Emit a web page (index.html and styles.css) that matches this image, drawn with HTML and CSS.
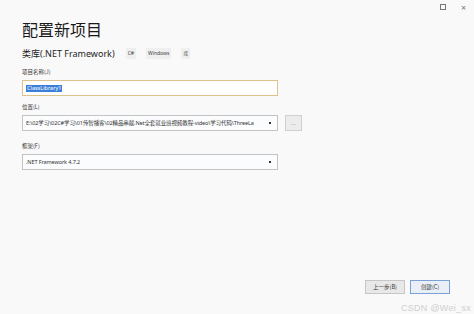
FILE: index.html
```html
<!DOCTYPE html>
<html lang="zh-CN">
<head>
    <meta charset="UTF-8">
    <title>配置新项目</title>
    <link rel="stylesheet" href="styles.css">
</head>
<body>
    <div class="window">
        <!-- 标题栏按钮 -->
        <div class="title-bar">
            <span class="win-btn max-btn"></span>
            <span class="win-btn close-btn">×</span>
        </div>

        <main class="content">
            <h1 class="page-title">配置新项目</h1>
            <div class="template-row">
                <span class="template-name">类库(.NET Framework)</span>
                <span class="tag">C#</span>
                <span class="tag">Windows</span>
                <span class="tag">库</span>
            </div>

            <label class="field-label first">项目名称(J)</label>
            <div class="input-box focused"><span class="selected-text">ClassLibrary1</span></div>

            <label class="field-label">位置(L)</label>
            <div class="location-row">
                <div class="select-box">
                    <span class="select-text">E:\02学习\02C#学习\01传智播客\02精品串献.Net全套就业班视频教程-video\学习代码\ThreeLa</span>
                    <span class="arrow"></span>
                </div>
                <button class="browse-btn">...</button>
            </div>

            <label class="field-label wide">框架(F)</label>
            <div class="select-box">
                <span class="select-text">.NET Framework 4.7.2</span>
                <span class="arrow"></span>
            </div>
        </main>

        <footer class="footer">
            <button class="btn">上一步(B)</button>
            <button class="btn primary">创建(C)</button>
        </footer>
        <div class="watermark">CSDN @Wei_sx</div>
    </div>
</body>
</html>
```

FILE: styles.css
```css
/* --- 기본 초기화 --- */
* {
    box-sizing: border-box;
    margin: 0;
    padding: 0;
}

body {
    width: 474px;
    height: 314px;
    background: #f9f9f9;
    font-family: 'Noto Sans', 'Noto Sans CJK SC', sans-serif;
    color: #1e1e1e;
    overflow: hidden;
}

.window {
    position: relative;
    height: 100%;
    display: flex;
    flex-direction: column;
}

/* --- 标题栏 --- */
.title-bar {
    height: 14px;
    display: flex;
    justify-content: flex-end;
    align-items: center;
    gap: 14px;
    padding: 0 7px 0 0;
}

.win-btn {
    width: 7px;
    height: 7px;
    font-size: 9px;
    line-height: 7px;
    color: #777;
    text-align: center;
}

.max-btn {
    border: 1px solid #777;
    width: 6px;
    height: 6px;
}

/* --- 主体 --- */
.content {
    padding: 0 0 0 22px;
    width: 301px;
    box-sizing: content-box;
    display: flex;
    flex-direction: column;
}

.page-title {
    font-family: 'Noto Sans CJK SC', sans-serif;
    font-size: 16px;
    font-weight: 400;
    line-height: 22px;
    margin-top: 4px;
    color: #1a1a1a;
}

.template-row {
    display: flex;
    align-items: center;
    gap: 10px;
    margin-top: 7px;
    height: 13px;
}

.template-name {
    font-size: 9px;
    margin-right: 1px;
    color: #1e1e1e;
}

.tag {
    font-size: 5px;
    background: #efefef;
    color: #444;
    padding: 2px 2px;
    line-height: 7px;
}

.field-label {
    font-family: 'Noto Sans CJK SC', sans-serif;
    font-size: 5.5px;
    color: #333;
    margin-top: 7px;
    line-height: 8px;
    height: 12px;
}

.field-label.first {
    margin-top: 8px;
}

.field-label.wide {
    margin-top: 11px;
}

.input-box,
.select-box {
    width: 256px;
    height: 16px;
    background: #fff;
    border: 1px solid #c8c8c8;
    display: flex;
    align-items: center;
    padding: 0 3px;
    font-size: 5.5px;
}

.input-box.focused {
    border-color: #dcc28c;
}

.selected-text {
    background: #3c7fd8;
    color: #fff;
    padding: 0 1px;
    line-height: 7px;
}

.select-box {
    background: #fbfcfe;
    justify-content: space-between;
    border-color: #c4c4c4;
}

.select-text {
    white-space: nowrap;
    overflow: hidden;
    color: #333;
    letter-spacing: -0.1px;
}

.arrow {
    width: 2px;
    height: 2px;
    background: #333;
    margin: 0 3px 0 4px;
    flex-shrink: 0;
}

.location-row {
    display: flex;
    gap: 7px;
    align-items: center;
}

.browse-btn {
    width: 17px;
    height: 16px;
    background: #ececec;
    border: 1px solid #cfcfcf;
    font-size: 6px;
    color: #777;
    line-height: 10px;
}

/* --- 底部按钮 --- */
.footer {
    margin-top: auto;
    display: flex;
    justify-content: flex-end;
    gap: 5px;
    padding: 0 24px 20px 0;
}

.btn {
    width: 40px;
    height: 14px;
    font-family: 'Noto Sans CJK SC', sans-serif;
    font-size: 5.5px;
    color: #333;
    background: #e8e8e8;
    border: 1px solid #c6c6c6;
}

.btn.primary {
    background: #e9eef7;
    border-color: #7aa2d6;
}

.watermark {
    position: absolute;
    right: 3px;
    bottom: 1px;
    font-family: 'Liberation Sans', sans-serif;
    font-size: 9px;
    color: #cfcfcf;
    letter-spacing: 0.3px;
}
```
